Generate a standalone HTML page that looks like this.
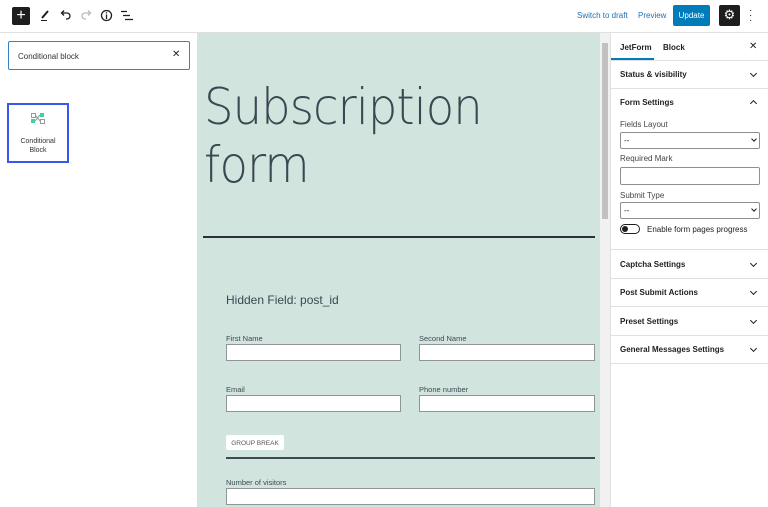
<!DOCTYPE html><html><head><style>
*{box-sizing:border-box;margin:0;padding:0}
body{width:768px;height:507px;overflow:hidden;font-family:"Liberation Sans",sans-serif;background:#fff;position:relative;color:#1e1e1e}
.a{position:absolute}
.t{font-size:8px;color:#1e1e1e}
.h{font-size:8px;font-weight:bold;color:#1e1e1e}
.chev{position:absolute;right:12px;width:5px;height:5px;border-right:1.3px solid #1e1e1e;border-bottom:1.3px solid #1e1e1e;transform:rotate(45deg)}
.bd{position:absolute;left:610px;width:158px;height:1px;background:#e0e0e0}
.inp{position:absolute;background:#fff;border:1px solid #8c8f94;border-radius:2px}
.fi{position:absolute;background:#fff;border:1px solid #8d959b}
.lb{position:absolute;font-size:7.5px;color:#3c4a54}
</style></head><body>
<!-- top bar -->
<div class="a" style="left:12px;top:7px;width:18px;height:18px;background:#1e1e1e;border-radius:2px;color:#fff;font-size:16px;line-height:17px;text-align:center">+</div>
<svg class="a" style="left:38px;top:8px" width="14" height="14" viewBox="0 0 14 14"><path d="M4 10 L10 3" stroke="#1e1e1e" stroke-width="2"/><path d="M3 12.5 H9" stroke="#1e1e1e" stroke-width="1"/></svg>
<svg class="a" style="left:59px;top:9px" width="13" height="12" viewBox="0 0 13 12"><path d="M3 4 H8 a3 3 0 0 1 0 6 H7 M5 1.5 L2.5 4 L5 6.5" fill="none" stroke="#1e1e1e" stroke-width="1.3"/></svg>
<svg class="a" style="left:80px;top:9px" width="13" height="12" viewBox="0 0 13 12"><path d="M10 4 H5 a3 3 0 0 0 0 6 H6 M8 1.5 L10.5 4 L8 6.5" fill="none" stroke="#bbb" stroke-width="1.3"/></svg>
<svg class="a" style="left:100px;top:9px" width="13" height="13" viewBox="0 0 13 13"><circle cx="6.5" cy="6.5" r="5" fill="none" stroke="#1e1e1e" stroke-width="1.3"/><path d="M6.5 5.5 V10 M6.5 3.3 V4.5" stroke="#1e1e1e" stroke-width="1.3"/></svg>
<svg class="a" style="left:121px;top:10px" width="12" height="11" viewBox="0 0 12 11"><path d="M0 1.5 H6 M2 5.5 H9 M4 9.5 H12" stroke="#1e1e1e" stroke-width="1.3"/></svg>
<div class="a" style="left:577px;top:11px;font-size:8px;color:#2271b1">Switch to draft</div>
<div class="a" style="left:638px;top:11px;font-size:8px;color:#2271b1">Preview</div>
<div class="a" style="left:673px;top:5px;width:37px;height:21px;background:#007cba;border-radius:2px;color:#fff;font-size:8px;line-height:21px;text-align:center">Update</div>
<div class="a" style="left:719px;top:5px;width:21px;height:21px;background:#1e1e1e;border-radius:2px;color:#fff;font-size:13px;line-height:20px;text-align:center">⚙</div>
<div class="a" style="left:749px;top:8px;font-size:10px;line-height:5px;color:#1e1e1e">·<br>·<br>·</div>
<div class="a" style="left:0;top:32px;width:768px;height:1px;background:#e0e0e0"></div>
<!-- left panel -->
<div class="a" style="left:8px;top:41px;width:182px;height:29px;border:1.5px solid #3582c4;border-radius:2px"></div>
<div class="a t" style="left:18px;top:52px;color:#333">Conditional block</div>
<div class="a" style="left:172px;top:49px;font-size:10px">✕</div>
<div class="a" style="left:7px;top:103px;width:62px;height:60px;border:2px solid #3858e9"></div>
<svg class="a" style="left:30px;top:112px" width="16" height="12" viewBox="0 0 16 12"><rect x="1.5" y="1.5" width="4" height="4" fill="none" stroke="#999"/><rect x="10" y="1" width="4" height="4" fill="#3cd3a0"/><rect x="1" y="7" width="4" height="4" fill="#3cd3a0"/><rect x="10.5" y="7.5" width="4" height="4" fill="none" stroke="#999"/><path d="M5.5 3.5 L10.5 9.5 M5 9 L10 3" stroke="#999"/></svg>
<div class="a" style="left:7px;top:137px;width:62px;text-align:center;font-size:7px;line-height:9px;color:#333">Conditional<br>Block</div>
<div class="a" style="left:197px;top:33px;width:1px;height:474px;background:#e0e0e0"></div>
<!-- canvas -->
<div class="a" style="left:198px;top:33px;width:402px;height:474px;background:#d1e4dd"></div>
<div class="a" style="left:204px;top:78px;font-size:50px;line-height:58px;font-weight:300;color:#3b4751;font-family:'DejaVu Sans','Liberation Sans',sans-serif;letter-spacing:-1px;transform:scaleX(.93);transform-origin:left">Subscription<br>form</div>
<div class="a" style="left:203px;top:236px;width:392px;height:2px;background:#28303d"></div>
<div class="a" style="left:226px;top:293px;font-size:12px;color:#3b4751">Hidden Field: post_id</div>
<div class="lb" style="left:226px;top:334px">First Name</div>
<div class="lb" style="left:419px;top:334px">Second Name</div>
<div class="fi" style="left:226px;top:344px;width:175px;height:17px"></div>
<div class="fi" style="left:419px;top:344px;width:176px;height:17px"></div>
<div class="lb" style="left:226px;top:385px">Email</div>
<div class="lb" style="left:419px;top:385px">Phone number</div>
<div class="fi" style="left:226px;top:395px;width:175px;height:17px"></div>
<div class="fi" style="left:419px;top:395px;width:176px;height:17px"></div>
<div class="a" style="left:226px;top:435px;width:58px;height:15px;background:#fff;border-radius:2px;font-size:6.5px;color:#555;line-height:17px;text-align:center">GROUP BREAK</div>
<div class="a" style="left:226px;top:457px;width:369px;height:1.5px;background:#3c4a54"></div>
<div class="lb" style="left:226px;top:478px">Number of visitors</div>
<div class="fi" style="left:226px;top:488px;width:369px;height:17px"></div>
<!-- scrollbar -->
<div class="a" style="left:600px;top:33px;width:10px;height:474px;background:#f1f1f1"></div>
<div class="a" style="left:602px;top:43px;width:6px;height:176px;background:#c1c1c1"></div>
<div class="a" style="left:610px;top:33px;width:1px;height:474px;background:#e0e0e0"></div>
<!-- sidebar -->
<div class="a h" style="left:620px;top:43px">JetForm</div>
<div class="a h" style="left:663px;top:43px">Block</div>
<div class="a" style="left:749px;top:41px;font-size:10px">✕</div>
<div class="a" style="left:611px;top:58px;width:43px;height:2px;background:#007cba"></div>
<div class="bd" style="top:60px"></div>
<div class="a h" style="left:620px;top:70px">Status &amp; visibility</div><div class="chev" style="top:71px"></div>
<div class="bd" style="top:88px"></div>
<div class="a h" style="left:620px;top:98px">Form Settings</div><div class="chev" style="top:101px;transform:rotate(225deg)"></div>
<div class="a t" style="left:620px;top:120px;color:#444">Fields Layout</div>
<div class="inp" style="left:620px;top:132px;width:140px;height:17px"></div><div class="a t" style="left:624px;top:136px">--</div><div class="chev" style="top:137px;right:12px;width:4px;height:4px;border-width:1px"></div>
<div class="a t" style="left:620px;top:154px;color:#444">Required Mark</div>
<div class="inp" style="left:620px;top:167px;width:140px;height:18px"></div>
<div class="a t" style="left:620px;top:191px;color:#444">Submit Type</div>
<div class="inp" style="left:620px;top:202px;width:140px;height:17px"></div><div class="a t" style="left:624px;top:206px">--</div><div class="chev" style="top:207px;right:12px;width:4px;height:4px;border-width:1px"></div>
<div class="a" style="left:620px;top:224px;width:20px;height:10px;border:1px solid #1e1e1e;border-radius:5px"></div>
<div class="a" style="left:622px;top:226px;width:6px;height:6px;background:#1e1e1e;border-radius:50%"></div>
<div class="a t" style="left:647px;top:225px">Enable form pages progress</div>
<div class="bd" style="top:249px"></div>
<div class="a h" style="left:620px;top:260px">Captcha Settings</div><div class="chev" style="top:261px"></div>
<div class="bd" style="top:278px"></div>
<div class="a h" style="left:620px;top:288px">Post Submit Actions</div><div class="chev" style="top:289px"></div>
<div class="bd" style="top:306px"></div>
<div class="a h" style="left:620px;top:317px">Preset Settings</div><div class="chev" style="top:318px"></div>
<div class="bd" style="top:335px"></div>
<div class="a h" style="left:620px;top:345px">General Messages Settings</div><div class="chev" style="top:346px"></div>
<div class="bd" style="top:363px"></div>
</body></html>
